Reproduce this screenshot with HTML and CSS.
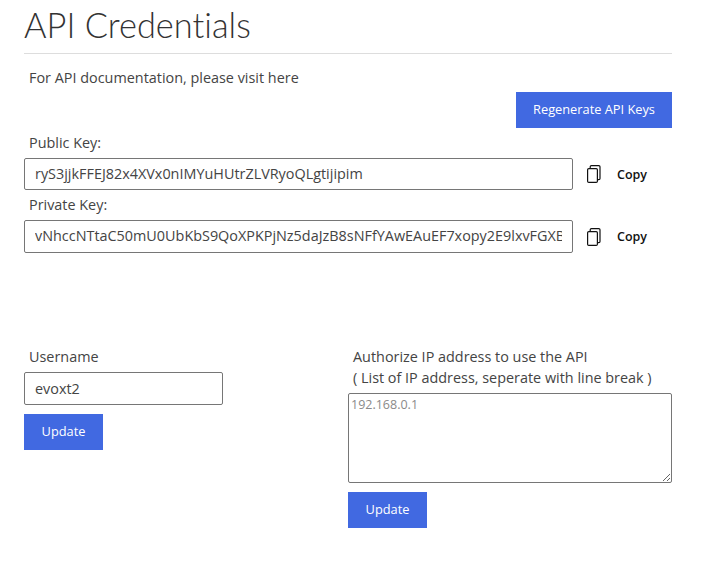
FILE: index.html
```html
<!DOCTYPE html>
<html lang="en">
<head>
    <meta charset="UTF-8">
    <meta name="viewport" content="width=device-width, initial-scale=1.0">
    <title>API Credentials</title>
    <link rel="stylesheet" href="styles.css">
</head>
<body>
    <main class="page">
        <h1 class="title">API Credentials</h1>
        <p class="doc-link">For API documentation, please visit <a href="#">here</a></p>
        <div class="regen-row">
            <button class="btn btn-regen" type="button">Regenerate API Keys</button>
        </div>

        <label class="key-label">Public Key:</label>
        <div class="key-row">
            <input class="field key-input" type="text" value="ryS3jjkFFEJ82x4XVx0nIMYuHUtrZLVRyoQLgtijipim" readonly>
            <svg class="copy-icon" width="16" height="20" viewBox="0 0 16 20" fill="none" stroke="#111" stroke-width="1.2">
                <rect x="1.6" y="4.6" width="9.8" height="13.8" rx="1.2"/>
                <path d="M4.2 4.4V2.8c0-.7.5-1.2 1.2-1.2h7.4c.7 0 1.2.5 1.2 1.2v11.6c0 .7-.5 1.2-1.2 1.2h-1.2"/>
            </svg>
            <span class="copy-text">Copy</span>
        </div>

        <label class="key-label">Private Key:</label>
        <div class="key-row">
            <input class="field key-input key-private" type="text" value="vNhccNTtaC50mU0UbKbS9QoXPKPjNz5daJzB8sNFfYAwEAuEF7xopy2E9lxvFGXB" readonly>
            <svg class="copy-icon" width="16" height="20" viewBox="0 0 16 20" fill="none" stroke="#111" stroke-width="1.2">
                <rect x="1.6" y="4.6" width="9.8" height="13.8" rx="1.2"/>
                <path d="M4.2 4.4V2.8c0-.7.5-1.2 1.2-1.2h7.4c.7 0 1.2.5 1.2 1.2v11.6c0 .7-.5 1.2-1.2 1.2h-1.2"/>
            </svg>
            <span class="copy-text">Copy</span>
        </div>

        <div class="settings">
            <div class="settings-user">
                <label class="set-label">Username</label>
                <input class="field user-input" type="text" value="evoxt2">
                <button class="btn btn-update" type="button">Update</button>
            </div>
            <div class="settings-ip">
                <label class="ip-label">Authorize IP address to use the API<br>( List of IP address, seperate with line break )</label>
                <textarea class="ip-area" placeholder="192.168.0.1"></textarea>
                <button class="btn btn-update" type="button">Update</button>
            </div>
        </div>
    </main>
</body>
</html>
```

FILE: styles.css
```css
body {
    font-family: "Open Sans", "Liberation Sans", sans-serif;
    margin: 0;
    padding: 0;
    background-color: #ffffff;
    color: #444444;
    font-size: 14.4px;
}

.page {
    width: 648px;
    margin-left: 24px;
}

.title {
    font-family: Lato, "Open Sans", sans-serif;
    font-weight: 300;
    font-size: 34.4px;
    font-variant-ligatures: none;
    line-height: 36px;
    color: #333333;
    margin: 0;
    padding: 7px 0 10px 0;
    border-bottom: 1px solid #dddddd;
}

.doc-link {
    margin: 14px 0 0 5px;
    line-height: 20px;
}

.doc-link a {
    color: #444444;
    text-decoration: none;
}

.regen-row {
    display: flex;
    justify-content: flex-end;
    margin-top: 4px;
}

.btn {
    border: none;
    background-color: #4169e1;
    color: #ffffff;
    font-family: "Open Sans", "Liberation Sans", sans-serif;
    font-size: 12.8px;
    height: 36px;
    padding: 0 0 2px 0;
    cursor: pointer;
}

.btn-regen {
    width: 156px;
}

.btn-update {
    width: 79px;
    display: block;
}

.key-label {
    display: block;
    margin: 0 0 5px 5px;
    line-height: 20px;
    height: 20px;
}

.regen-row + .key-label {
    margin-top: 5px;
    margin-bottom: 5px;
}

.field {
    box-sizing: border-box;
    border: 1px solid #767676;
    border-radius: 2px;
    font-family: "Open Sans", "Liberation Sans", sans-serif;
    font-size: 14.4px;
    color: #444444;
    padding: 0 10px;
    height: 32px;
    outline: none;
}

.key-row {
    display: flex;
    align-items: center;
    margin-bottom: 5px;
}

.key-input {
    width: 549px;
    flex-shrink: 0;
    padding-bottom: 2px;
}

.key-private {
    height: 33px;
}

.copy-icon {
    margin-left: 13px;
    flex-shrink: 0;
}

.copy-text {
    margin-left: 15px;
    font-size: 12.5px;
    font-weight: 600;
    color: #111111;
}

.settings {
    display: flex;
    margin-top: 91px;
}

.settings-user {
    width: 324px;
}

.set-label {
    display: block;
    margin: 3px 0 5px 5px;
    line-height: 20px;
}

.user-input {
    display: block;
    width: 199px;
    height: 33px;
    margin-bottom: 9px;
}

.settings-ip {
    width: 324px;
}

.ip-label {
    display: block;
    margin: 2px 0 5px 5px;
    line-height: 21px;
}

.ip-area {
    display: block;
    box-sizing: border-box;
    width: 324px;
    height: 90px;
    margin-bottom: 9px;
    border: 1px solid #767676;
    border-radius: 2px;
    padding: 2px;
    font-family: "Open Sans", "Liberation Sans", sans-serif;
    font-size: 12.5px;
    outline: none;
}

.ip-area::placeholder {
    color: #8a8a8a;
}
```
